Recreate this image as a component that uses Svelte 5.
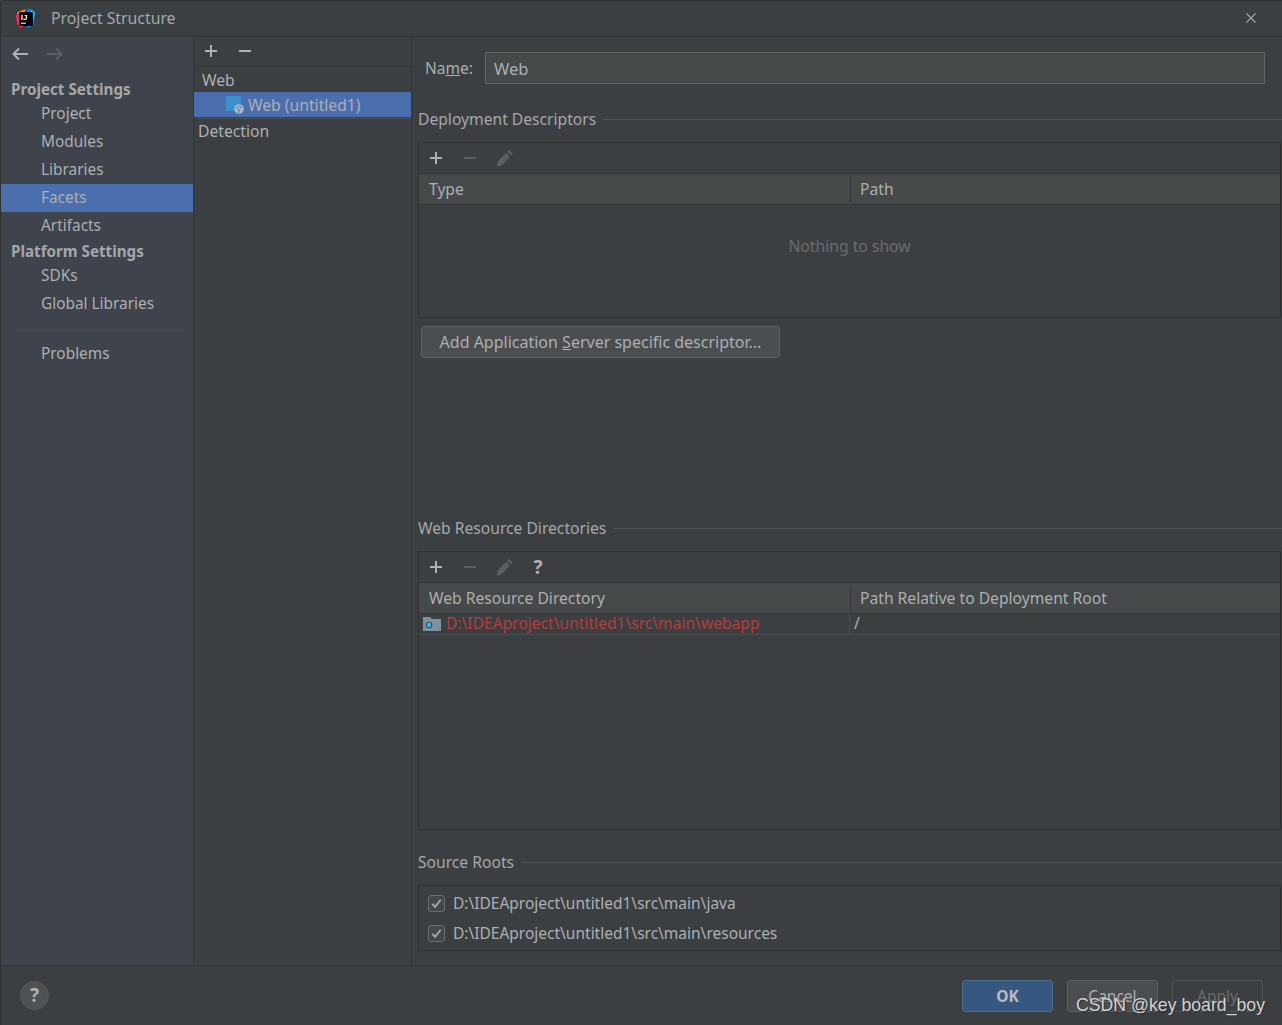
<script lang="ts">
  const settings = ['Project', 'Modules', 'Libraries', 'Facets', 'Artifacts'];
  const platform = ['SDKs', 'Global Libraries'];
  const roots = ['D:\\IDEAproject\\untitled1\\src\\main\\java', 'D:\\IDEAproject\\untitled1\\src\\main\\resources'];
</script>

{#snippet plus()}
  <svg class="tool" viewBox="0 0 16 16"><path d="M7 2h2v5h5v2H9v5H7V9H2V7h5z" fill="#afb1b3" /></svg>
{/snippet}
{#snippet minus(dim = false)}
  <svg class="tool" viewBox="0 0 16 16"><path d="M2 7h12v2H2z" fill={dim ? '#5c5f61' : '#afb1b3'} /></svg>
{/snippet}
{#snippet pencil()}
  <svg class="tool pen" viewBox="0 0 16 16"><path d="M11.5 0.8l3.4 3.2-1.5 1.6-3.4-3.2zM9 3.4l3.4 3.2-7.6 8-4.2 1 0.9-4.2z" fill="#5c5f61" /></svg>
{/snippet}

<div class="window">
  <header class="title">
    <svg class="logo" viewBox="0 0 20 20">
      <path d="M2 4L10 1 9 11 2 13z" fill="#fc801d" />
      <path d="M1 7l5-4 3 14-4 2-3-4z" fill="#fe2857" />
      <path d="M12 0l7 4-1 12-5 3-4-3z" fill="#087cfa" />
      <path d="M15 1l4 3-1 7-3-2z" fill="#07c3f2" />
      <rect x="4" y="4" width="13" height="13" fill="#000" />
      <text x="5.500" y="11" class="logo-text">IJ</text>
      <rect x="5.500" y="14" width="5" height="1" fill="#fff" />
    </svg>
    <span>Project Structure</span>
    <svg class="close" viewBox="0 0 12 12"><path d="M1.500 1.500l9 9M10.500 1.500l-9 9" stroke="#a5a7a9" stroke-width="1.100" fill="none" /></svg>
  </header>

  <div class="main">
    <nav class="side">
      <div class="arrows">
        <svg viewBox="0 0 18 14"><path d="M17 7H3M8 1.500L2.500 7 8 12.500" stroke="#afb1b3" stroke-width="2" fill="none" /></svg>
        <svg viewBox="0 0 18 14"><path d="M1 7h14M10 1.500L15.500 7 10 12.500" stroke="#5c5f61" stroke-width="2" fill="none" /></svg>
      </div>
      <h3>Project Settings</h3>
      {#each settings as s}
        <div class="item" class:active={s === 'Facets'}>{s}</div>
      {/each}
      <h3 class="second">Platform Settings</h3>
      {#each platform as s}
        <div class="item">{s}</div>
      {/each}
      <div class="side-sep"></div>
      <div class="item">Problems</div>
    </nav>

    <div class="tree">
      <div class="tree-tools">
        {@render plus()}
        {@render minus()}
      </div>
      <div class="tree-group">Web</div>
      <div class="tree-row">
        <svg class="facet" viewBox="0 0 18 18">
          <rect x="0" y="0" width="15" height="15" fill="#3d8fcb" />
          <circle cx="13" cy="13" r="4.800" fill="#a9b7c6" />
          <path d="M10 11c2 0 2 2 3 3s-1 3-1 3M14 9.500c-1 1 0 2 2 2" stroke="#4b6eaf" stroke-width="1" fill="none" />
        </svg>
        <span>Web (untitled1)</span>
      </div>
      <div class="tree-sep"></div>
      <div class="tree-detect">Detection</div>
    </div>

    <section class="content">
      <div class="name-row">
        <label for="facet-name">Na<u>m</u>e:</label>
        <input id="facet-name" value="Web" />
      </div>

      <div class="legend first"><span>Deployment Descriptors</span></div>
      <div class="box deploy">
        <div class="tools">
          {@render plus()}
          {@render minus(true)}
          {@render pencil()}
        </div>
        <div class="thead">
          <div class="col1">Type</div>
          <div class="col2">Path</div>
        </div>
        <div class="empty">Nothing to show</div>
      </div>
      <div class="action-row">
        <button class="btn add">Add Application <u>S</u>erver specific descriptor...</button>
      </div>

      <div class="legend web"><span>Web Resource Directories</span></div>
      <div class="box resources">
        <div class="tools">
          {@render plus()}
          {@render minus(true)}
          {@render pencil()}
          <span class="help-tool">?</span>
        </div>
        <div class="thead">
          <div class="col1">Web Resource Directory</div>
          <div class="col2">Path Relative to Deployment Root</div>
        </div>
        <div class="trow">
          <div class="cell1">
            <svg class="folder" viewBox="0 0 18 14">
              <path d="M0 0h7l2 2h9v12H0z" fill="#7f919c" />
              <circle cx="6" cy="8" r="3.200" fill="#2f3b42" />
              <circle cx="6" cy="8" r="2.400" fill="#40b6e0" />
            </svg>
            <span class="missing">D:\IDEAproject\untitled1\src\main\webapp</span>
          </div>
          <div class="cell2">/</div>
        </div>
      </div>

      <div class="legend source"><span>Source Roots</span></div>
      <div class="box roots">
        {#each roots as r}
          <div class="root">
            <span class="check">
              <svg viewBox="0 0 14 14"><path d="M2.500 7.500l3 3 6-7.500" stroke="#a7a9ab" stroke-width="2" fill="none" /></svg>
            </span>
            <span>{r}</span>
          </div>
        {/each}
      </div>
    </section>
  </div>

  <footer class="foot">
    <div class="help">?</div>
    <div class="buttons">
      <button class="btn ok">OK</button>
      <button class="btn">Cancel</button>
      <button class="btn off">Apply</button>
    </div>
  </footer>

  <div class="mark">CSDN @key board_boy</div>
</div>

<style>
  :global(body) {
    margin: 0;
    background: #3c3f41;
  }

  .window {
    position: relative;
    width: 1282px;
    height: 1025px;
    box-sizing: border-box;
    border-left: 1px solid #2e3031;
    border-top: 1px solid #2e3031;
    border-top-left-radius: 5px;
    background: #3c3f41;
    color: #adafb1;
    font-family: "Noto Sans", "Open Sans", sans-serif;
    font-size: 15.5px;
    display: flex;
    flex-direction: column;
    overflow: hidden;
  }

  .title {
    height: 35px;
    flex: none;
    box-sizing: content-box;
    display: flex;
    align-items: center;
    padding-left: 14px;
    border-bottom: 1px solid #323436;
    color: #a5a7a9;
    font-size: 15.8px;
  }

  .title span {
    margin-bottom: 1px;
  }

  .logo {
    width: 21px;
    height: 21px;
    margin-right: 15px;
  }

  .logo-text {
    font-family: "Liberation Sans", sans-serif;
    font-size: 7.500px;
    font-weight: bold;
    fill: #fff;
  }

  .close {
    width: 12px;
    height: 12px;
    margin-left: auto;
    margin-right: 25px;
    margin-bottom: 2px;
  }

  .main {
    flex: 1;
    min-height: 0;
    display: flex;
    border-bottom: 1px solid #323436;
  }

  .side {
    width: 192px;
    flex: none;
    background: #3e434c;
    border-right: 1px solid #323436;
    font-size: 15.400px;
  }

  .arrows {
    height: 34px;
    display: flex;
    align-items: center;
    gap: 17px;
    padding-left: 10px;
    margin-bottom: 5px;
  }

  .arrows svg {
    width: 18px;
    height: 14px;
  }

  h3 {
    margin: 0;
    font-size: 15.200px;
    line-height: 26px;
    height: 24px;
    padding-left: 10px;
    font-weight: 700;
    color: #a5a7a9;
  }

  h3.second {
    height: 22px;
    line-height: 22px;
  }

  .item {
    height: 28px;
    line-height: 27px;
    padding-left: 40px;
  }

  .item.active {
    background: #4b6eaf;
  }

  .side-sep {
    height: 1px;
    margin: 12px 8px 9px 14px;
    background: #464a52;
  }

  .tree {
    width: 217px;
    flex: none;
    border-right: 1px solid #323436;
    box-sizing: content-box;
    font-size: 15.700px;
  }

  .tree-tools {
    height: 28px;
    padding-bottom: 1px;
    border-bottom: 1px solid #323436;
    display: flex;
    align-items: center;
    gap: 18px;
    padding-left: 9px;
  }

  .tool {
    width: 16px;
    height: 16px;
    flex: none;
  }

  .pen {
    width: 18px;
    height: 18px;
    margin-right: -2px;
  }

  .tree-group {
    height: 25px;
    line-height: 26px;
    padding-left: 8px;
  }

  .tree-row {
    height: 25px;
    background: #4b6eaf;
    display: flex;
    align-items: center;
    padding-left: 32px;
  }

  .facet {
    width: 18px;
    height: 18px;
    margin-right: 4px;
  }

  .tree-sep {
    height: 1px;
    margin: 1px 0 0 4px;
    background: #515355;
  }

  .tree-detect {
    height: 26px;
    line-height: 24px;
    padding-left: 4px;
  }

  .content {
    flex: 1;
    min-width: 0;
    padding-left: 6px;
    display: flex;
    flex-direction: column;
  }

  .name-row {
    height: 32px;
    margin-top: 15px;
    display: flex;
    align-items: center;
  }

  .name-row label {
    margin-left: 7px;
    width: 60px;
    flex: none;
  }

  input {
    width: 780px;
    height: 32px;
    box-sizing: border-box;
    background: #45494a;
    border: 1px solid #646464;
    color: #a9b1b6;
    font: inherit;
    font-size: 16.500px;
    padding: 0 8px;
    outline: none;
  }

  .legend {
    display: flex;
    align-items: center;
    gap: 7px;
    height: 24px;
    color: #a5a7a9;
    font-size: 15.650px;
  }

  .legend::after {
    content: '';
    flex: 1;
    height: 1px;
    background: #515355;
  }

  .legend.first {
    margin-top: 23px;
  }

  .legend.web {
    margin-top: 158px;
  }

  .legend.source {
    margin-top: 20px;
  }

  .box {
    width: 863px;
    box-sizing: border-box;
    border: 1px solid #2f3133;
    margin-top: 11px;
  }

  .deploy {
    height: 176px;
    display: flex;
    flex-direction: column;
  }

  .resources {
    height: 279px;
  }

  .roots {
    height: 66px;
    padding-top: 2px;
  }

  .tools {
    height: 30px;
    display: flex;
    align-items: center;
    gap: 18px;
    padding-left: 9px;
    border-bottom: 1px solid #323436;
  }

  .help-tool {
    width: 16px;
    text-align: center;
    font-weight: 700;
    font-size: 19px;
    color: #afb1b3;
  }

  .thead {
    height: 31px;
    display: flex;
    background: #45494a;
    border-bottom: 1px solid #323436;
    align-items: center;
    box-sizing: border-box;
    font-size: 15.650px;
  }

  .col1 {
    width: 432px;
    padding-left: 10px;
    box-sizing: border-box;
    border-right: 1px solid #323436;
    height: 26px;
    line-height: 26px;
  }

  .col2 {
    padding-left: 9px;
  }

  .empty {
    flex: 1;
    display: flex;
    align-items: center;
    justify-content: center;
    color: #6a6c6e;
    padding-bottom: 31px;
    font-size: 15.700px;
  }

  .action-row {
    margin: 8px 0 0 3px;
  }

  .btn {
    height: 32px;
    box-sizing: border-box;
    background: #4a4e50;
    border: 1px solid #5e6060;
    border-radius: 3px;
    color: #adafb1;
    font: inherit;
    padding: 0;
  }

  .add {
    width: 359px;
    font-size: 16px;
  }

  .trow {
    height: 21px;
    display: flex;
    border-bottom: 1px solid #4a4c4e;
    align-items: center;
    box-sizing: border-box;
  }

  .cell1 {
    width: 431px;
    flex: none;
    height: 20px;
    display: flex;
    align-items: center;
    padding-left: 4px;
    box-sizing: border-box;
    border-right: 1px solid #4a4c4e;
  }

  .cell1 span,
  .cell2 {
    line-height: 17px;
    margin-top: -2px;
  }

  .cell2 {
    padding-left: 4px;
    color: #b0b2b4;
  }

  .folder {
    width: 18px;
    height: 14px;
    margin-right: 5px;
  }

  .missing {
    color: #b33d3d;
    font-size: 15.600px;
  }

  .root {
    height: 30px;
    display: flex;
    align-items: center;
    padding-left: 9px;
    gap: 8px;
  }

  .check {
    width: 17px;
    height: 17px;
    box-sizing: border-box;
    border: 1px solid #6a6c6e;
    border-radius: 3px;
    background: #43494a;
    display: flex;
    align-items: center;
    justify-content: center;
  }

  .check svg {
    width: 13px;
    height: 13px;
  }

  .foot {
    height: 59px;
    flex: none;
    display: flex;
    align-items: flex-start;
    justify-content: space-between;
  }

  .help {
    width: 29px;
    height: 29px;
    margin: 15px 0 0 19px;
    border-radius: 50%;
    background: #4e5254;
    border: 1px solid #565a5c;
    box-sizing: border-box;
    text-align: center;
    font-weight: 700;
    font-size: 19px;
    line-height: 26px;
    color: #b0b2b4;
  }

  .buttons {
    display: flex;
    gap: 14px;
    padding: 14px 19px 0 0;
  }

  .buttons .btn {
    width: 91px;
  }

  .ok {
    background: #365880;
    border-color: #4c708c;
    font-weight: 700;
    color: #b9bbbd;
  }

  .off {
    background: transparent;
    border-color: #515355;
    color: #6a6c6e;
  }

  .mark {
    position: absolute;
    left: 1075px;
    top: 992px;
    font-family: "Liberation Sans", sans-serif;
    font-size: 17.700px;
    line-height: 24px;
    color: #d2d2d2;
    text-shadow: 1px 1px 1px #2e2e2e;
    white-space: nowrap;
  }
</style>
